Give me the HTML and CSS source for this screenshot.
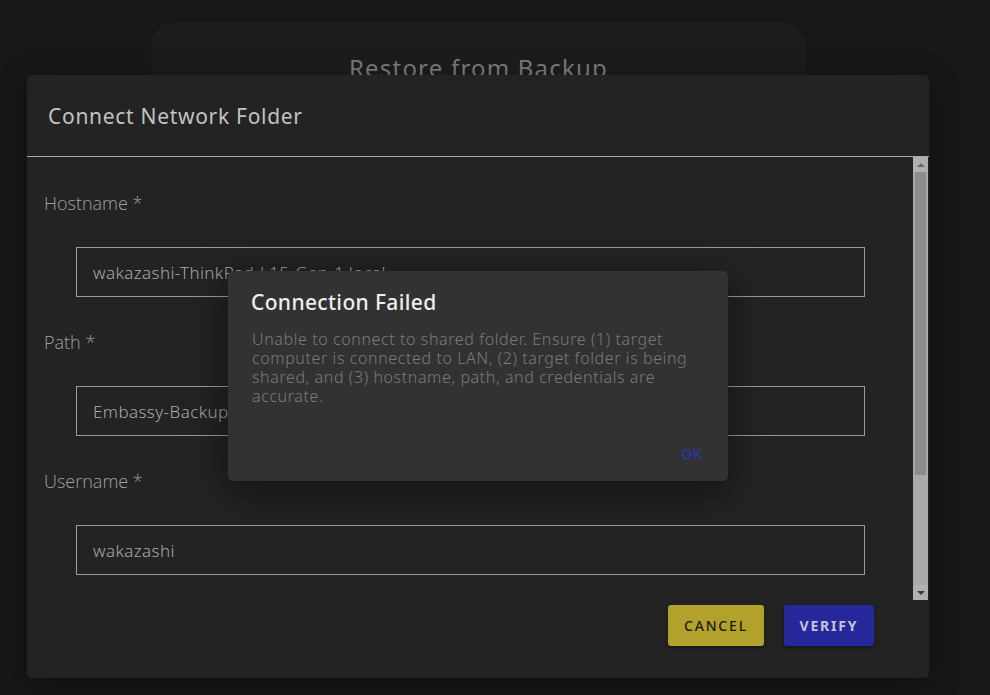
FILE: index.html
```html
<!DOCTYPE html>
<html lang="en">
<head>
<meta charset="utf-8">
<title>Connect Network Folder</title>
<link rel="stylesheet" href="styles.css">
</head>
<body>
<div class="page">
  <section class="back-card">
    <h1 class="back-title">Restore from Backup</h1>
  </section>
</div>

<div class="modal">
  <header class="modal-header">
    <h2 class="modal-title">Connect Network Folder</h2>
  </header>
  <div class="modal-body">
    <div class="form">
      <div class="field">
        <label class="field-label">Hostname *</label>
        <div class="input">wakazashi-ThinkPad-L15-Gen-1.local</div>
      </div>
      <div class="field">
        <label class="field-label">Path *</label>
        <div class="input">Embassy-Backups</div>
      </div>
      <div class="field">
        <label class="field-label">Username *</label>
        <div class="input">wakazashi</div>
      </div>
    </div>
    <div class="scrollbar">
      <div class="sb-btn sb-up"><span class="tri-up"></span></div>
      <div class="sb-track"><div class="sb-thumb"></div></div>
      <div class="sb-btn sb-down"><span class="tri-down"></span></div>
    </div>
  </div>
  <footer class="modal-footer">
    <button class="btn btn-cancel">Cancel</button>
    <button class="btn btn-verify">Verify</button>
  </footer>
</div>

<div class="alert">
  <h3 class="alert-title">Connection Failed</h3>
  <p class="alert-text">Unable to connect to shared folder. Ensure (1) target computer is connected to LAN, (2) target folder is being shared, and (3) hostname, path, and credentials are accurate.</p>
  <div class="alert-actions">
    <button class="alert-ok">OK</button>
  </div>
</div>
</body>
</html>
```

FILE: styles.css
```css
* { box-sizing: border-box; }
html, body {
  margin: 0;
  height: 100%;
  overflow: hidden;
}
body {
  background: #171717;
  font-family: "Noto Sans", "DejaVu Sans", sans-serif;
  position: relative;
}
h1, h2, h3, p { margin: 0; font-weight: normal; }

.page {
  padding: 22px 0 0 151px;
}
.back-card {
  width: 655px;
  height: 640px;
  background: #1c1c1c;
  border-radius: 24px;
  padding-top: 29px;
  text-align: center;
}
.back-title {
  font-size: 24px;
  color: #7a7a7a;
  letter-spacing: 1.2px;
}

.modal {
  position: absolute;
  left: 27px;
  top: 75px;
  width: 902px;
  height: 603px;
  background: #232323;
  border-radius: 5px;
  display: flex;
  flex-direction: column;
  box-shadow: 0 8px 30px rgba(0,0,0,0.35);
}
.modal-header {
  height: 82px;
  padding: 0 21px;
  display: flex;
  align-items: center;
  border-bottom: 1px solid #a8a8a8;
}
.modal-title {
  font-size: 21px;
  color: #c2c2c2;
  letter-spacing: 0.7px;
  padding-top: 1px;
}
.modal-body {
  height: 443px;
  display: flex;
  overflow: hidden;
}
.form {
  flex: 1;
  padding: 34px 0 0 17px;
}
.field-label {
  display: block;
  font-family: "Open Sans", sans-serif;
  font-weight: 300;
  font-size: 18px;
  line-height: 24px;
  color: #a0a0a0;
}
.input {
  margin: 32px 0 33px 32px;
  width: 789px;
  height: 50px;
  border: 1px solid #9c9c9c;
  padding: 0 16px;
  display: flex;
  align-items: center;
  font-family: "Noto Sans", sans-serif;
  font-weight: 300;
  font-size: 17px;
  color: #a8a8a8;
  letter-spacing: 0.4px;
  white-space: nowrap;
}
.scrollbar {
  width: 15px;
  margin-right: 1px;
  background: #a9a9a9;
  display: flex;
  flex-direction: column;
}
.sb-btn {
  height: 15px;
  display: flex;
  align-items: center;
  justify-content: center;
  background: #b0b0b0;
}
.tri-up, .tri-down {
  width: 0; height: 0;
  border-left: 4px solid transparent;
  border-right: 4px solid transparent;
}
.tri-up { border-bottom: 4px solid #6a6a6a; }
.tri-down { border-top: 4px solid #3c3c3c; }
.sb-track {
  flex: 1;
  padding: 0 2px;
}
.sb-thumb {
  height: 303px;
  background: #8c8c8c;
}

.modal-footer {
  flex: 1;
  display: flex;
  justify-content: flex-end;
  align-items: flex-start;
  gap: 20px;
  padding: 5px 55px 0 0;
}
.btn {
  height: 41px;
  border: none;
  border-radius: 3px;
  font-family: "Noto Sans", sans-serif;
  font-size: 14px;
  text-transform: uppercase;
  letter-spacing: 1.8px;
  padding: 0;
  box-shadow: 0 2px 4px rgba(0,0,0,0.4);
}
.btn-cancel {
  width: 96px;
  background: #b2a12a;
  color: #1a1a1a;
  font-weight: 500;
}
.btn-verify {
  width: 90px;
  background: #25279b;
  color: #c4c6d6;
  font-weight: 700;
}

.alert {
  position: absolute;
  left: 228px;
  top: 271px;
  width: 500px;
  height: 210px;
  background: #323232;
  border-radius: 5px;
  padding: 18px 23px 0 23px;
  display: flex;
  flex-direction: column;
  box-shadow: 0 10px 40px rgba(0,0,0,0.5);
}
.alert-title {
  font-size: 21px;
  line-height: 26px;
  color: #eeeeee;
  font-weight: 500;
  letter-spacing: 0.35px;
}
.alert-text {
  margin-top: 15px;
  padding-left: 1px;
  font-size: 16px;
  line-height: 19px;
  font-weight: 300;
  color: #7a7a7a;
  letter-spacing: 0.6px;
  width: 452px;
}
.alert-actions {
  margin-top: auto;
  display: flex;
  justify-content: flex-end;
  padding: 0 0 12px 0;
}
.alert-ok {
  background: none;
  border: none;
  padding: 6px 4px;
  margin-right: -1px;
  font-family: "Noto Sans", sans-serif;
  font-size: 14px;
  color: #2b36c6;
  letter-spacing: 0.5px;
}
```
